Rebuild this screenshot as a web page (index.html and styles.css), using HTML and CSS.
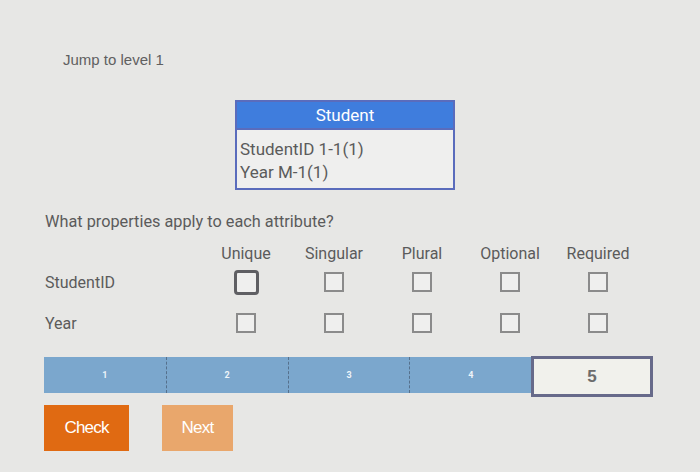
FILE: index.html
```html
<!DOCTYPE html>
<html lang="en">
<head>
    <meta charset="UTF-8">
    <meta name="viewport" content="width=device-width, initial-scale=1.0">
    <title>Jump to level</title>
    <link rel="stylesheet" href="styles.css">
</head>
<body>
    <div class="page">
        <div class="jump">Jump to level 1</div>

        <!-- entity -->
        <div class="entity">
            <div class="entity-title">Student</div>
            <div class="entity-body">
                <div>StudentID 1-1(1)</div>
                <div>Year M-1(1)</div>
            </div>
        </div>

        <p class="question">What properties apply to each attribute?</p>

        <div class="props">
            <div class="head"></div>
            <div class="head">Unique</div>
            <div class="head">Singular</div>
            <div class="head">Plural</div>
            <div class="head">Optional</div>
            <div class="head">Required</div>

            <div class="label">StudentID</div>
            <div class="cell"><span class="box focus"></span></div>
            <div class="cell"><span class="box"></span></div>
            <div class="cell"><span class="box"></span></div>
            <div class="cell"><span class="box"></span></div>
            <div class="cell"><span class="box"></span></div>

            <div class="label">Year</div>
            <div class="cell"><span class="box"></span></div>
            <div class="cell"><span class="box"></span></div>
            <div class="cell"><span class="box"></span></div>
            <div class="cell"><span class="box"></span></div>
            <div class="cell"><span class="box"></span></div>
        </div>

        <!-- levels -->
        <div class="levels">
            <div class="level done">1</div>
            <div class="level done">2</div>
            <div class="level done">3</div>
            <div class="level done">4</div>
            <div class="level current">5</div>
        </div>

        <div class="actions">
            <button class="check">Check</button>
            <button class="next">Next</button>
        </div>
    </div>
</body>
</html>
```

FILE: styles.css
```css
body {
    margin: 0;
    background: #e7e7e5;
    font-family: Roboto, "Liberation Sans", Arial, sans-serif;
    color: #5b5b5b;
}
.page {
    width: 609px;
    padding: 51px 0 0 44px;
}
.jump {
    margin-left: 19px;
    font-family: "Liberation Sans", Arial, sans-serif;
    font-size: 15px;
    line-height: 18px;
    color: #606060;
}
.entity {
    width: 216px;
    margin: 31px 0 0 191px;
    border: 2px solid #5a6cbc;
    background: #efefee;
}
.entity-title {
    height: 26px;
    line-height: 26px;
    background: #3f7ddd;
    color: #fff;
    text-align: center;
    font-size: 17px;
}
.entity-body {
    padding: 8px 0 4px 3px;
    border-top: 2px solid #5a6cbc;
    font-size: 17px;
    line-height: 23px;
}
.question {
    margin: 22px 0 0 1px;
    font-size: 16.3px;
    line-height: 20px;
}
.props {
    display: grid;
    grid-template-columns: 158px repeat(5, 88px);
    grid-template-rows: 24px 32px 50px;
    margin-top: 10px;
    font-size: 16px;
}
.head {
    text-align: center;
    line-height: 24px;
}
.label {
    display: flex;
    align-items: center;
    padding-left: 1px;
}
.cell {
    display: flex;
    align-items: center;
    justify-content: center;
}
.box {
    width: 16px;
    height: 16px;
    border: 2px solid #8b8b8b;
    background: #efefee;
}
.box.focus {
    width: 19px;
    height: 19px;
    border: 3px solid #5f5f63;
    border-radius: 4px;
}
.levels {
    display: grid;
    grid-template-columns: repeat(5, 1fr);
    margin-top: 9px;
    height: 36px;
}
.level {
    display: flex;
    align-items: center;
    justify-content: center;
}
.level.done {
    background: #7ba7cd;
    color: #eef4f9;
    font-size: 9px;
    font-weight: bold;
    border-left: 1px dashed #55708c;
}
.level.done:first-child {
    border-left: none;
}
.level.current {
    background: #f1f1ec;
    border: 3px solid #676a8a;
    font-family: "Liberation Sans", Arial, sans-serif;
    font-size: 17px;
    font-weight: bold;
    color: #6c6c6c;
    margin-top: -1px;
    margin-bottom: -4px;
}
.actions {
    display: flex;
    gap: 33px;
    margin-top: 12px;
}
.actions button {
    height: 46px;
    border: none;
    color: #fff;
    font-family: "Liberation Sans", Arial, sans-serif;
    font-size: 17px;
    letter-spacing: -0.8px;
}
.check {
    width: 85px;
    background: #e06a12;
}
.next {
    width: 71px;
    background: #e9a76c;
}
```
